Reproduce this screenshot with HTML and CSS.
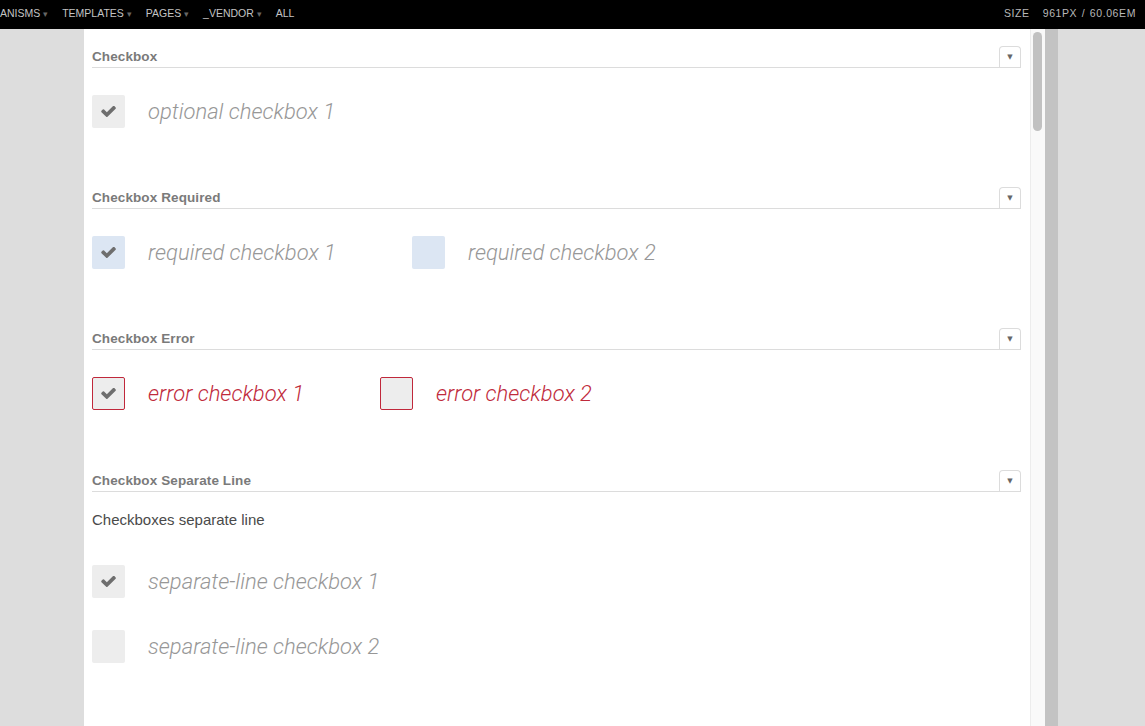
FILE: index.html
```html
<!DOCTYPE html>
<html>
<head>
<meta charset="utf-8">
<link rel="stylesheet" href="styles.css">
</head>
<body>
<header class="topbar">
  <nav class="nav">
    <span class="nav-item">ANISMS <span class="caret">▾</span></span>
    <span class="nav-item">TEMPLATES <span class="caret">▾</span></span>
    <span class="nav-item">PAGES <span class="caret">▾</span></span>
    <span class="nav-item">_VENDOR <span class="caret">▾</span></span>
    <span class="nav-item">ALL</span>
  </nav>
  <div class="size">
    <span class="size-label">SIZE</span>
    <span class="size-value">961PX / 60.06EM</span>
  </div>
</header>

<div class="stage">
  <div class="viewport">
    <div class="panel">
      <section class="pattern">
        <div class="pattern-head">
          <h2 class="pattern-title">Checkbox</h2>
          <button class="toggle">▼</button>
        </div>
        <div class="pattern-body">
          <div class="row">
            <label class="item">
              <span class="box checked"><svg class="tick" viewBox="100 380 1580 1100"><path d="M1671 566q0 40-28 68l-724 724-136 136q-28 28-68 28t-68-28l-136-136-362-362q-28-28-28-68t28-68l136-136q28-28 68-28t68 28l294 295 656-657q28-28 68-28t68 28l136 136q28 28 28 68z"/></svg></span>
              <span class="label">optional checkbox 1</span>
            </label>
          </div>
        </div>
      </section>

      <section class="pattern">
        <div class="pattern-head">
          <h2 class="pattern-title">Checkbox Required</h2>
          <button class="toggle">▼</button>
        </div>
        <div class="pattern-body">
          <div class="row">
            <label class="item">
              <span class="box required"><svg class="tick" viewBox="100 380 1580 1100"><path d="M1671 566q0 40-28 68l-724 724-136 136q-28 28-68 28t-68-28l-136-136-362-362q-28-28-28-68t28-68l136-136q28-28 68-28t68 28l294 295 656-657q28-28 68-28t68 28l136 136q28 28 28 68z"/></svg></span>
              <span class="label">required checkbox 1</span>
            </label>
            <label class="item">
              <span class="box required"></span>
              <span class="label">required checkbox 2</span>
            </label>
          </div>
        </div>
      </section>

      <section class="pattern">
        <div class="pattern-head">
          <h2 class="pattern-title">Checkbox Error</h2>
          <button class="toggle">▼</button>
        </div>
        <div class="pattern-body">
          <div class="row">
            <label class="item">
              <span class="box error"><svg class="tick" viewBox="100 380 1580 1100"><path d="M1671 566q0 40-28 68l-724 724-136 136q-28 28-68 28t-68-28l-136-136-362-362q-28-28-28-68t28-68l136-136q28-28 68-28t68 28l294 295 656-657q28-28 68-28t68 28l136 136q28 28 28 68z"/></svg></span>
              <span class="label label-error">error checkbox 1</span>
            </label>
            <label class="item">
              <span class="box error"></span>
              <span class="label label-error">error checkbox 2</span>
            </label>
          </div>
        </div>
      </section>

      <section class="pattern">
        <div class="pattern-head">
          <h2 class="pattern-title">Checkbox Separate Line</h2>
          <button class="toggle">▼</button>
        </div>
        <div class="pattern-body separate">
          <p class="desc">Checkboxes separate line</p>
          <div class="stack">
            <label class="item">
              <span class="box"><svg class="tick" viewBox="100 380 1580 1100"><path d="M1671 566q0 40-28 68l-724 724-136 136q-28 28-68 28t-68-28l-136-136-362-362q-28-28-28-68t28-68l136-136q28-28 68-28t68 28l294 295 656-657q28-28 68-28t68 28l136 136q28 28 28 68z"/></svg></span>
              <span class="label">separate-line checkbox 1</span>
            </label>
            <label class="item">
              <span class="box"></span>
              <span class="label">separate-line checkbox 2</span>
            </label>
          </div>
        </div>
      </section>
    </div>
    <div class="scrollbar"><div class="thumb"></div></div>
  </div>
  <div class="handle"></div>
</div>
</body>
</html>
```

FILE: styles.css
```css
* { box-sizing: border-box; }

html, body {
  margin: 0;
  padding: 0;
  height: 100%;
  overflow: hidden;
  background: #dddddd;
  font-family: "Liberation Sans", Arial, sans-serif;
}

.topbar {
  height: 29px;
  background: #000;
  display: flex;
  align-items: center;
  justify-content: space-between;
  color: #c4c4c4;
  font-size: 10.5px;
  padding: 0 9px 3px 0;
}

.nav {
  display: flex;
  gap: 14px;
}

.nav-item {
  white-space: nowrap;
}

.caret {
  color: #666;
  font-size: 9px;
}

.size {
  display: flex;
  gap: 13px;
  color: #b8b8b8;
  letter-spacing: 0.6px;
  word-spacing: 1px;
}

.stage {
  display: flex;
  height: 697px;
  padding-left: 84px;
}

.viewport {
  width: 961px;
  display: flex;
  background: #fff;
}

.panel {
  flex: 1;
  padding: 17px 9px 0 8px;
  overflow: hidden;
}

.scrollbar {
  width: 15px;
  background: #f9f9f9;
  border-left: 1px solid #ececec;
  padding: 3px 0 0 2px;
}

.thumb {
  width: 9px;
  height: 99px;
  border-radius: 5px;
  background: #c1c1c1;
}

.handle {
  width: 13px;
  background: #c3c3c3;
}

.pattern-head {
  display: flex;
  justify-content: space-between;
  align-items: flex-end;
  height: 22px;
  border-bottom: 1px solid #dcdcdc;
}

.pattern-title {
  margin: 0;
  font-size: 13.5px;
  font-weight: bold;
  color: #7a7a7a;
  line-height: 20px;
  letter-spacing: 0.1px;
}

.toggle {
  width: 22px;
  height: 21px;
  border: 1px solid #dcdcdc;
  border-bottom: none;
  border-radius: 4px 4px 0 0;
  background: #fff;
  color: #666;
  font-size: 7px;
  padding: 0;
  line-height: 20px;
  font-family: "DejaVu Sans", sans-serif;
}

.pattern-body {
  padding: 27px 0 59px;
}

.pattern:nth-child(3) .pattern-body {
  padding-bottom: 60px;
}

.row {
  display: flex;
  gap: 76px;
}

.item {
  display: flex;
  align-items: center;
  gap: 23px;
}

.box {
  width: 33px;
  height: 33px;
  border-radius: 2px;
  background: #ededed;
  display: flex;
  align-items: center;
  justify-content: center;
}

.box.required {
  background: #dce6f3;
}

.box.error {
  border: 1px solid #c0283b;
}

.tick {
  width: 15px;
  height: 11px;
  fill: #6e6e6e;
}

.label {
  font-family: Roboto, "Liberation Sans", sans-serif;
  font-weight: 300;
  font-style: italic;
  font-size: 22px;
  color: #979797;
  line-height: 33px;
}

.label-error {
  color: #bf2a3b;
}

.separate {
  padding-top: 18px;
}

.desc {
  margin: 0;
  font-size: 15px;
  line-height: 20px;
  color: #4a4a4a;
}

.stack {
  display: flex;
  flex-direction: column;
  gap: 32px;
  margin-top: 35px;
}
```
